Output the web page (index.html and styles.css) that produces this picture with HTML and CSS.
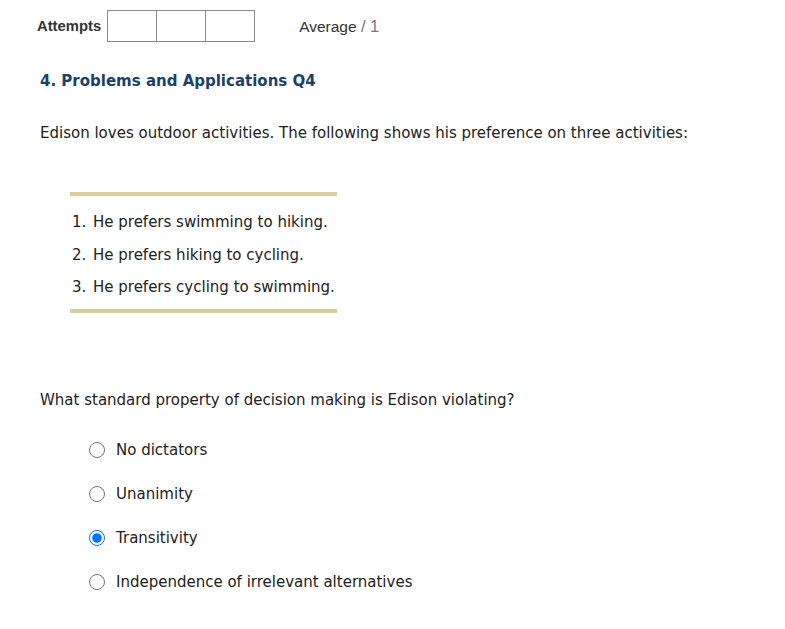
FILE: index.html
```html
<!DOCTYPE html>
<html>
<head>
<meta charset="utf-8">
<link rel="stylesheet" href="styles.css">
</head>
<body>
<div class="topbar">
  <span class="attempts-label">Attempts</span>
  <div class="boxes"><span class="box"></span><span class="box"></span><span class="box"></span></div>
  <span class="average">Average <span class="slash">/ 1</span></span>
</div>
<h2 class="qtitle">4. Problems and Applications Q4</h2>
<p class="intro">Edison loves outdoor activities. The following shows his preference on three activities:</p>
<div class="prefs">
  <ol class="prefs-list">
    <li>He prefers swimming to hiking.</li>
    <li>He prefers hiking to cycling.</li>
    <li>He prefers cycling to swimming.</li>
  </ol>
</div>
<p class="question">What standard property of decision making is Edison violating?</p>
<div class="options">
  <label class="opt"><input type="radio" name="q"><span>No dictators</span></label>
  <label class="opt"><input type="radio" name="q"><span>Unanimity</span></label>
  <label class="opt"><input type="radio" name="q" checked><span>Transitivity</span></label>
  <label class="opt"><input type="radio" name="q"><span>Independence of irrelevant alternatives</span></label>
</div>
</body>
</html>
```
FILE: styles.css
```css
html, body { margin: 0; padding: 0; background: #fff; }
body { font-family: "DejaVu Sans", Verdana, sans-serif; font-size: 15px; color: #222; width: 785px; }
.topbar { display: flex; align-items: center; padding: 10px 0 0 37px; height: 32px; }
.attempts-label { font-family: "Liberation Sans", Arial, sans-serif; font-weight: bold; font-size: 14.8px; color: #333; margin-right: 6px; }
.boxes { display: flex; border: 1px solid #8a8a8a; height: 30px; }
.box { width: 48px; border-left: 1px solid #8a8a8a; }
.box:first-child { border-left: none; }
.average { font-family: "Liberation Sans", Arial, sans-serif; font-size: 15.5px; color: #333; margin-left: 44px; }
.slash { color: #777; font-size: 16.5px; }
.qtitle { font-size: 15px; font-weight: bold; color: #1a416d; margin: 30px 0 0 40px; line-height: 18px; }
.intro { margin: 34px 0 0 40px; line-height: 18px; }
.prefs { margin: 50px 0 0 70px; width: 267px; border-top: 4px solid #d9cd9e; border-bottom: 4px solid #d9cd9e; padding: 17px 0 13px; }
.prefs-list { margin: 0; padding: 0 0 0 2px; list-style: none; counter-reset: n; }
.prefs-list li { counter-increment: n; line-height: 18px; margin-bottom: 14.5px; }
.prefs-list li:last-child { margin-bottom: 0; }
.prefs-list li::before { content: counter(n) "."; display: inline-block; width: 21px; }
.question { margin: 78px 0 0 40px; line-height: 18px; }
.options { display: flex; flex-direction: column; gap: 26px; margin: 32px 0 0 89px; }
.opt { display: flex; align-items: center; line-height: 18px; }
.opt input { margin: 0 11px 0 0; width: 16px; height: 16px; }
```
